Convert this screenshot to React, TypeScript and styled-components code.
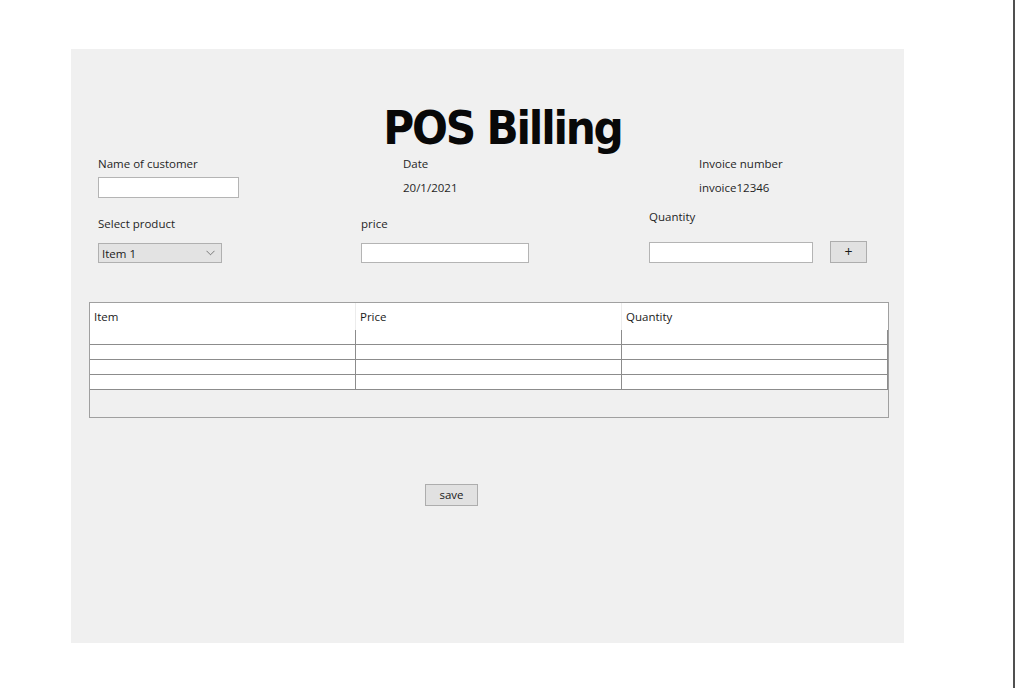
import styled, { createGlobalStyle } from "styled-components";

const GlobalStyle = createGlobalStyle`
  html, body {
    margin: 0;
    padding: 0;
    background: #fff;
  }
  * {
    box-sizing: border-box;
  }
`;

const Page = styled.div`
  width: 1015px;
  height: 688px;
  padding: 49px 0 0 71px;
  border-right: 2px solid #505050;
  background: #fff;
  font-family: "Open Sans", "Noto Sans", sans-serif;
`;

const Panel = styled.main`
  width: 833px;
  height: 594px;
  background: #f0f0f0;
  padding: 50px 18px 0 18px;
`;

const Title = styled.h1`
  margin: 0;
  padding-left: 30px;
  text-align: center;
  font-family: "DejaVu Sans Condensed", "DejaVu Sans", sans-serif;
  font-weight: bold;
  font-size: 47px;
  line-height: 57px;
  letter-spacing: -2.2px;
  color: #080808;
`;

const Row = styled.div<{ $cols: string; $top?: number }>`
  display: grid;
  grid-template-columns: ${(p) => p.$cols};
  align-items: end;
  padding-left: 9px;
  margin-top: ${(p) => p.$top ?? 0}px;
`;

const Field = styled.div<{ $gap: number }>`
  display: flex;
  flex-direction: column;
  align-items: flex-start;
  gap: ${(p) => p.$gap}px;
`;

const Label = styled.span<{ $lift?: number }>`
  font-size: 11.5px;
  line-height: 16px;
  color: #1f1f1f;
  margin-top: ${(p) => -(p.$lift ?? 0)}px;
  margin-bottom: ${(p) => p.$lift ?? 0}px;
`;

const Value = styled.span`
  display: flex;
  align-items: center;
  height: 21px;
  font-size: 11.5px;
  color: #1f1f1f;
`;

const TextBox = styled.input<{ $w: number; $h?: number }>`
  width: ${(p) => p.$w}px;
  height: ${(p) => p.$h ?? 20}px;
  margin: 0;
  padding: 0 3px;
  border: 1px solid #b4b4b4;
  background: #fff;
  outline: none;
  font-family: inherit;
  font-size: 11.5px;
`;

const Combo = styled.div`
  display: flex;
  align-items: center;
  justify-content: space-between;
  width: 124px;
  height: 20px;
  padding: 0 6px 0 3px;
  border: 1px solid #b0b0b0;
  background: #e3e3e3;
  font-size: 11.5px;
  color: #1a1a1a;
`;

const QtyWrap = styled.div`
  display: flex;
  align-items: flex-end;
  gap: 17px;
`;

const Button = styled.button<{ $w: number; $size?: number }>`
  display: flex;
  align-items: center;
  justify-content: center;
  width: ${(p) => p.$w}px;
  height: 22px;
  margin: 0;
  padding: 0;
  border: 1px solid #adadad;
  background: #e1e1e1;
  font-family: "Open Sans", "Noto Sans", sans-serif;
  font-size: ${(p) => p.$size ?? 11.5}px;
  color: #1a1a1a;
  line-height: 1;
`;

const TableBox = styled.div`
  margin-top: 39px;
  width: 800px;
  border: 1px solid #a0a0a0;
  background: #f0f0f0;
`;

const Grid = styled.div`
  display: grid;
  grid-template-columns: repeat(3, 1fr);
  background: #fff;
`;

const HeadCell = styled.div`
  height: 27px;
  padding-left: 4px;
  font-size: 11.5px;
  line-height: 27px;
  color: #1a1a1a;
  border-right: 1px solid #ececec;
  &:nth-child(3) {
    border-right: none;
  }
`;

const BodyCell = styled.div`
  height: 15px;
  border-right: 1px solid #8c8c8c;
  border-bottom: 1px solid #8c8c8c;
`;

const Filler = styled.div`
  height: 27px;
`;

const SaveRow = styled.div`
  display: flex;
  margin-top: 66px;
  padding-left: 336px;
`;

const Chevron = () => (
  <svg width="9" height="6" viewBox="0 0 9 6" fill="none">
    <path d="M0.5 0.8 L4.5 4.8 L8.5 0.8" stroke="#7a7a7a" strokeWidth="1" />
  </svg>
);

const rows = [0, 1, 2, 3];

const App = () => {
  return (
    <Page>
      <GlobalStyle />
      <Panel>
        <Title>POS Billing</Title>

        <Row $cols="305px 296px auto">
          <Field $gap={5}>
            <Label>Name of customer</Label>
            <TextBox $w={141} $h={21} />
          </Field>
          <Field $gap={5}>
            <Label>Date</Label>
            <Value>20/1/2021</Value>
          </Field>
          <Field $gap={5}>
            <Label>Invoice number</Label>
            <Value>invoice12346</Value>
          </Field>
        </Row>

        <Row $cols="263px 288px auto" $top={17}>
          <Field $gap={11}>
            <Label>Select product</Label>
            <Combo>
              <span>Item 1</span>
              <Chevron />
            </Combo>
          </Field>
          <Field $gap={11}>
            <Label>price</Label>
            <TextBox $w={168} />
          </Field>
          <QtyWrap>
            <Field $gap={11}>
              <Label $lift={6}>Quantity</Label>
              <TextBox $w={164} $h={21} />
            </Field>
            <Button $w={37} $size={14}>+</Button>
          </QtyWrap>
        </Row>

        <TableBox>
          <Grid>
            <HeadCell>Item</HeadCell>
            <HeadCell>Price</HeadCell>
            <HeadCell>Quantity</HeadCell>
            {rows.map((r) => [
              <BodyCell key={`a${r}`} />,
              <BodyCell key={`b${r}`} />,
              <BodyCell key={`c${r}`} />,
            ])}
          </Grid>
          <Filler />
        </TableBox>

        <SaveRow>
          <Button $w={53}>save</Button>
        </SaveRow>
      </Panel>
    </Page>
  );
};

export default App;
